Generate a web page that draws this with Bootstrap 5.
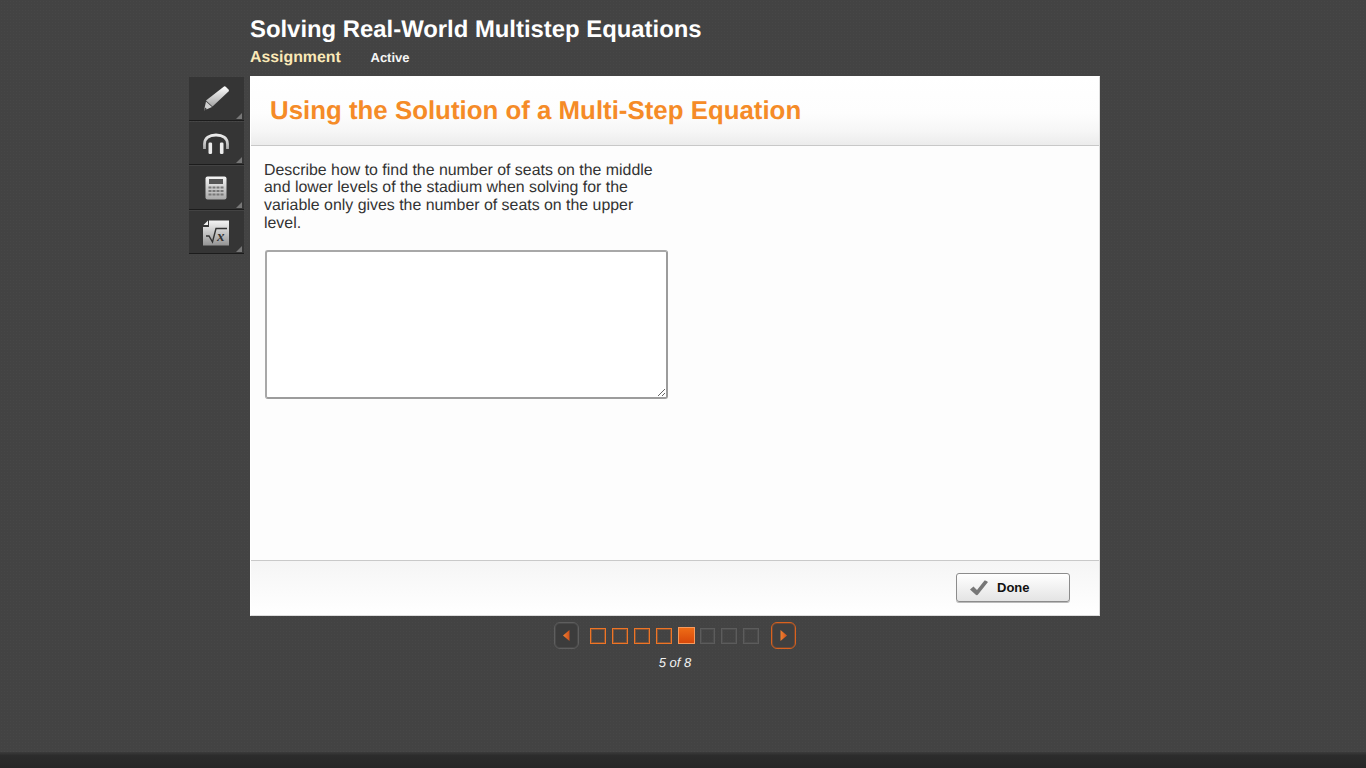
<!DOCTYPE html>
<html lang="en">
<head>
<meta charset="utf-8">
<title>Solving Real-World Multistep Equations</title>
<link href="https://cdn.jsdelivr.net/npm/bootstrap@5.3.0/dist/css/bootstrap.min.css" rel="stylesheet">
<style>
html,body{height:768px;overflow:hidden}
body{font-family:"Liberation Sans",Arial,sans-serif;text-rendering:geometricPrecision;background-color:#434343;background-image:radial-gradient(#474747 .6px,transparent .7px);background-size:3px 3px;color:#333}
.stage{height:752px;padding-left:189px}
.head-block{padding-left:61px;height:76px;padding-top:15px}
.page-title{font-size:23.87px;line-height:30px;font-weight:700;color:#fff;margin:0}
.sub-line{height:26px;margin-top:0}
.sub-kind{font-size:15.85px;font-weight:700;color:#fbe9b7;width:120.5px;line-height:26px}
.sub-state{font-size:13px;font-weight:700;color:#f5f5f5;line-height:25px}
.tool-col{width:55px;margin-right:6px;padding-top:1px}
.tool-btn{position:relative;width:54.5px;height:43.6px;margin-bottom:1px;background:#353535;border-bottom:1px solid #1c1c1c;padding:2px 0 0}
.tool-btn svg{display:block}
.corner-tick{position:absolute;right:2px;bottom:1px;width:0;height:0;border-style:solid;border-width:0 0 6px 6px;border-color:transparent transparent #777 transparent}
.panel-box{width:850px;height:540px;background:#fdfdfd;border:1px solid #ddd;border-top-color:#fff;border-left-color:#fff}
.panel-head{height:70px;padding:0 19px;background:linear-gradient(#fff 0,#fdfdfd 55%,#f6f6f6 80%,#ececec 100%);border-bottom:1px solid #c8c8c8;margin-top:-1px}
.panel-title{font-size:25.85px;font-weight:700;color:#f58b27;margin:0;line-height:70px}
.panel-main{height:414px;padding:15.6px 13px}
.prompt-text{width:404px;font-size:15.9px;line-height:17.7px;color:#333;margin:0 0 17.4px}
.answer-box{display:block;width:403px;height:149px;margin-left:1px;border:2px solid #a4a4a4;border-color:#a8a8a8 #9c9c9c #9c9c9c #a8a8a8;border-radius:3px;background:#fff;resize:both;outline:0}
.panel-foot{height:55px;border-top:1px solid #c9c9c9;background:linear-gradient(#f5f5f5,#fff);padding:12px 29px 0 0}
.done-btn{width:114px;height:29px;border:1px solid #8c8c8c;border-radius:3px;background:linear-gradient(#fff,#e4e4e4);font-size:13px;font-weight:700;color:#111;padding:0 0 0 12px;box-shadow:0 1px 0 #bbb}
.nav-strip{width:850px;margin-left:61px;padding-top:6px}
.step-arrow{width:25px;height:27px;border:1px solid #5e5e5e;box-shadow:inset 0 0 0 1px rgba(85,85,85,.5);border-radius:6px;background:#3c3c3c;padding:0}
.step-arrow.hot{border-color:#d9621f;box-shadow:inset 0 0 0 1px rgba(200,90,30,.35);background:#404040}
.step-dot{width:15.8px;height:16px;border:1px solid #ee7526;box-shadow:inset 0 0 0 1px rgba(226,105,30,.4);margin-right:6px;background:transparent}
.step-dot.now{width:17px;height:17px;background:linear-gradient(#ee6c16,#d8480a);border-color:#f79a5c;box-shadow:none;margin-right:5px}
.step-dot.off{border-color:#5c5c5c;box-shadow:inset 0 0 0 1px rgba(92,92,92,.4)}
.step-dot:last-child{margin-right:0}
.step-row{margin:0 11.7px 0 11.2px}
.step-count{font-size:13px;font-style:italic;color:#f1f1f1;text-align:center;width:850px;margin-left:61px;line-height:16px;padding-top:6px}
.bottom-bar{height:16px;background:linear-gradient(#3b3b3b 0,#2c2c2c 22%,#272727 100%)}
</style>
</head>
<body>
<div class="stage">
  <div class="head-block">
    <h1 class="page-title">Solving Real-World Multistep Equations</h1>
    <div class="sub-line d-flex"><div class="sub-kind">Assignment</div><div class="sub-state">Active</div></div>
  </div>
  <div class="d-flex">
    <div class="tool-col">
      <div class="tool-btn d-flex align-items-center justify-content-center">
        <svg width="28" height="28" viewBox="0 0 28 28"><defs><linearGradient id="g1" x1="0" y1="0" x2="0" y2="1"><stop offset="0" stop-color="#fff"/><stop offset="1" stop-color="#a5a5a5"/></linearGradient></defs><path d="M22 1.500Q23 1 24 2L26.500 4.500Q27.500 5.500 26.500 6.500L10.500 21.500 4 15.500Z" fill="url(#g1)"/><path d="M4 16.500 10 22 2 25.500Z" fill="#d0d0d0"/><path d="M2 25.500 3 22.500 5.200 24.200Z" fill="#3a3a3a"/></svg>
        <span class="corner-tick"></span>
      </div>
      <div class="tool-btn d-flex align-items-center justify-content-center">
        <svg width="28" height="22" viewBox="0 0 28 22"><defs><linearGradient id="g4" x1="0" y1="0" x2="0" y2="1"><stop offset="0" stop-color="#eee"/><stop offset="1" stop-color="#aaa"/></linearGradient></defs><path d="M2.500 16V11C2.500 5 7.500 2 14 2S25.500 5 25.500 11V16" fill="none" stroke="url(#g4)" stroke-width="2.800"/><rect x="6.500" y="9.500" width="3.600" height="11.500" rx="1.300" fill="#ececec"/><rect x="17.900" y="9.500" width="3.600" height="11.500" rx="1.300" fill="#ececec"/></svg>
        <span class="corner-tick"></span>
      </div>
      <div class="tool-btn d-flex align-items-center justify-content-center">
        <svg width="24" height="26" viewBox="0 0 24 26"><defs><linearGradient id="g2" x1="0" y1="0" x2="0" y2="1"><stop offset="0" stop-color="#f5f5f5"/><stop offset="1" stop-color="#a8a8a8"/></linearGradient></defs><rect x="1.500" y="1.500" width="21" height="23" rx="2" fill="url(#g2)"/><rect x="5" y="4" width="14" height="5" fill="#555"/><g fill="#777"><rect x="4.500" y="11.500" width="3" height="2"/><rect x="8.500" y="11.500" width="3" height="2"/><rect x="12.500" y="11.500" width="3" height="2"/><rect x="16.500" y="11.500" width="3" height="2"/><rect x="4.500" y="15" width="3" height="2"/><rect x="8.500" y="15" width="3" height="2"/><rect x="12.500" y="15" width="3" height="2"/><rect x="16.500" y="15" width="3" height="2"/><rect x="4.500" y="18.500" width="3" height="2"/><rect x="8.500" y="18.500" width="3" height="2"/><rect x="12.500" y="18.500" width="3" height="2"/><rect x="16.500" y="18.500" width="3" height="2"/></g></svg>
        <span class="corner-tick"></span>
      </div>
      <div class="tool-btn d-flex align-items-center justify-content-center">
        <svg width="28" height="28" viewBox="0 0 28 28"><defs><linearGradient id="g3" x1="0" y1="0" x2="0" y2="1"><stop offset="0" stop-color="#f5f5f5"/><stop offset="1" stop-color="#949494"/></linearGradient></defs><path d="M7 1.500H27V26.500H1V8H7Z" fill="url(#g3)"/><path d="M1.500 6 6 1.500V6Z" fill="#eee"/><path d="M4 17H7L10.500 23 14 9.500H25" fill="none" stroke="#333" stroke-width="1.400"/><text x="15" y="22" font-family="Liberation Serif, serif" font-style="italic" font-weight="700" font-size="15" fill="#333">x</text></svg>
        <span class="corner-tick"></span>
      </div>
    </div>
    <div>
      <div class="panel-box">
        <div class="panel-head"><h2 class="panel-title">Using the Solution of a Multi-Step Equation</h2></div>
        <div class="panel-main">
          <p class="prompt-text">Describe how to find the number of seats on the middle and lower levels of the stadium when solving for the variable only gives the number of seats on the upper level.</p>
          <textarea class="answer-box" aria-label="Answer"></textarea>
        </div>
        <div class="panel-foot d-flex justify-content-end align-items-start">
          <button class="done-btn d-flex align-items-center gap-2" type="button"><svg width="20" height="18" viewBox="0 0 20 18"><path d="M1 10.500 4.500 7.500 8 11 15.500 1.500Q17 1 19 3L9 15.500Q8 17 6.500 15.500Z" fill="#777"/></svg><span>Done</span></button>
        </div>
      </div>
    </div>
  </div>
  <div class="nav-strip d-flex justify-content-center align-items-center">
    <button class="step-arrow d-flex align-items-center justify-content-center" type="button" aria-label="Previous"><svg width="7" height="11" viewBox="0 0 7 11"><defs><linearGradient id="g5" x1="0" y1="0" x2="1" y2="0"><stop offset="0" stop-color="#f08030"/><stop offset="1" stop-color="#d0521c"/></linearGradient></defs><path d="M6.500 0V11L0 5.500Z" fill="url(#g5)"/></svg></button>
    <div class="step-row d-flex align-items-center">
      <div class="step-dot"></div><div class="step-dot"></div><div class="step-dot"></div><div class="step-dot"></div><div class="step-dot now"></div><div class="step-dot off"></div><div class="step-dot off"></div><div class="step-dot off"></div>
    </div>
    <button class="step-arrow hot d-flex align-items-center justify-content-center" type="button" aria-label="Next"><svg width="7" height="11" viewBox="0 0 7 11"><path d="M.5 0V11L7 5.500Z" fill="url(#g5)"/></svg></button>
  </div>
  <div class="step-count">5 of 8</div>
</div>
<div class="bottom-bar"></div>
<script src="https://cdn.jsdelivr.net/npm/bootstrap@5.3.0/dist/js/bootstrap.bundle.min.js"></script>
</body>
</html>
